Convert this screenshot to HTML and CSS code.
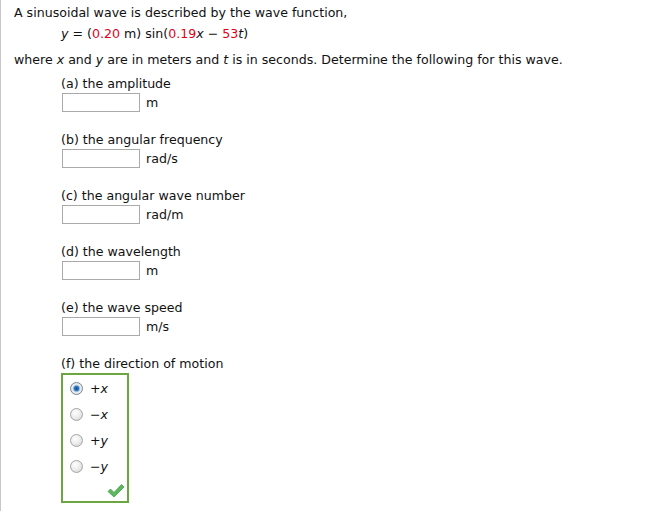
FILE: index.html
```html
<!DOCTYPE html>
<html>
<head>
<meta charset="utf-8">
<link rel="stylesheet" href="styles.css">
</head>
<body>
<div class="page">
  <div class="line l1">A sinusoidal wave is described by the wave function,</div>
  <div class="line eq indent"><i>y</i> = (<span class="red">0.20</span> m) sin(<span class="red">0.19</span><i>x</i> &minus; <span class="red">53</span><i>t</i>)</div>
  <div class="line l3">where <i>x</i> and <i>y</i> are in meters and <i>t</i> is in seconds. Determine the following for this wave.</div>
  <div class="parts indent">
    <div class="part">
      <div class="line">(a) the amplitude</div>
      <div class="row"><span class="box"></span><span class="unit">m</span></div>
    </div>
    <div class="part">
      <div class="line">(b) the angular frequency</div>
      <div class="row"><span class="box"></span><span class="unit">rad/s</span></div>
    </div>
    <div class="part">
      <div class="line">(c) the angular wave number</div>
      <div class="row"><span class="box"></span><span class="unit">rad/m</span></div>
    </div>
    <div class="part">
      <div class="line">(d) the wavelength</div>
      <div class="row"><span class="box"></span><span class="unit">m</span></div>
    </div>
    <div class="part">
      <div class="line">(e) the wave speed</div>
      <div class="row"><span class="box"></span><span class="unit">m/s</span></div>
    </div>
    <div class="part">
      <div class="line">(f) the direction of motion</div>
      <div class="choices">
        <div class="opt"><span class="radio on"></span><span class="lab">+<i>x</i></span></div>
        <div class="opt"><span class="radio"></span><span class="lab">&minus;<i>x</i></span></div>
        <div class="opt"><span class="radio"></span><span class="lab">+<i>y</i></span></div>
        <div class="opt"><span class="radio"></span><span class="lab">&minus;<i>y</i></span></div>
        <div class="check">
          <svg width="18" height="15" viewBox="0 0 18 15"><path d="M1 8.5 L3.5 6 L7 9.5 L14.5 1.5 L17 4 L7 14 Z" fill="#5cb85c" stroke="#4a9d4a" stroke-width="0.8" stroke-linejoin="round"/></svg>
        </div>
      </div>
    </div>
  </div>
</div>
</body>
</html>
```

FILE: styles.css
```css
html, body {
  margin: 0;
  padding: 0;
  background: #fff;
}
.page {
  border-left: 1px solid #c8c8c8;
  min-height: 511px;
  box-sizing: border-box;
  padding: 5px 0 0 13px;
  font-family: "DejaVu Sans", Verdana, sans-serif;
  font-size: 12.6px;
  color: #111;
}
.line {
  line-height: 16px;
  white-space: nowrap;
}
.indent {
  margin-left: 47px;
}
.eq {
  margin-top: 5px;
}
.l3 {
  margin-top: 10px;
}
.red {
  color: #e0001b;
}
.parts {
  margin-top: 8px;
}
.part {
  margin-bottom: 20px;
}
.row {
  display: flex;
  align-items: center;
  margin-top: 1px;
}
.box {
  display: block;
  width: 76px;
  height: 17px;
  border: 1px solid #aaa;
  margin-left: 1px;
  background: #fff;
}
.unit {
  margin-left: 6px;
}
.choices {
  margin-top: 1px;
  width: 64px;
  height: 126px;
  border: 2px solid #6ca640;
  position: relative;
}
.opt {
  display: flex;
  align-items: center;
  height: 26px;
  padding-left: 7px;
}
.radio {
  display: block;
  width: 11px;
  height: 11px;
  border-radius: 50%;
  border: 1px solid #a5a5a5;
  background: radial-gradient(circle at 40% 35%, #ffffff 0%, #ececec 50%, #cdcdcd 100%);
}
.radio.on {
  border-color: #7a8794;
  background: radial-gradient(circle at 50% 50%, #1d4f8f 0%, #2a74c0 28%, #8fb6dc 38%, #f0f0f0 55%, #cfcfcf 100%);
}
.lab {
  margin-left: 7px;
}
.check {
  position: absolute;
  right: 2px;
  bottom: 3px;
  line-height: 0;
}
```
